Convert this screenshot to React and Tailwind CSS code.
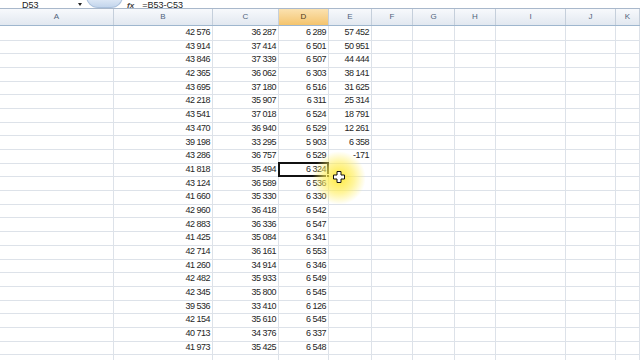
const rows = [
  ["42 576", "36 287", "6 289", "57 452"],
  ["43 914", "37 414", "6 501", "50 951"],
  ["43 846", "37 339", "6 507", "44 444"],
  ["42 365", "36 062", "6 303", "38 141"],
  ["43 695", "37 180", "6 516", "31 625"],
  ["42 218", "35 907", "6 311", "25 314"],
  ["43 541", "37 018", "6 524", "18 791"],
  ["43 470", "36 940", "6 529", "12 261"],
  ["39 198", "33 295", "5 903", "6 358"],
  ["43 286", "36 757", "6 529", "-171"],
  ["41 818", "35 494", "6 324", ""],
  ["43 124", "36 589", "6 536", ""],
  ["41 660", "35 330", "6 330", ""],
  ["42 960", "36 418", "6 542", ""],
  ["42 883", "36 336", "6 547", ""],
  ["41 425", "35 084", "6 341", ""],
  ["42 714", "36 161", "6 553", ""],
  ["41 260", "34 914", "6 346", ""],
  ["42 482", "35 933", "6 549", ""],
  ["42 345", "35 800", "6 545", ""],
  ["39 536", "33 410", "6 126", ""],
  ["42 154", "35 610", "6 545", ""],
  ["40 713", "34 376", "6 337", ""],
  ["41 973", "35 425", "6 548", ""],
  ["", "", "", ""],
];

const cols = ["A", "B", "C", "D", "E", "F", "G", "H", "I", "J", "K"];
const gridCols = "grid grid-cols-[114px_99px_66px_50px_43px_41px_42px_41px_70px_50px_1fr]";

function Cell({ value, selected }) {
  return (
    <div className="relative h-full border-r border-b border-[#dde2e9] flex items-center justify-end pr-[2px] text-[9px] tracking-[-0.5px] text-[#262626]">
      {value}
      {selected && (
        <div className="absolute -left-px -top-px -right-px -bottom-px border-2 border-[#111]">
          <div className="absolute -right-[3px] -bottom-[3px] w-[4px] h-[4px] bg-[#111] border border-white" />
        </div>
      )}
    </div>
  );
}

export default function App() {
  return (
    <div className="relative w-[640px] h-[360px] overflow-hidden bg-white" style={{ fontFamily: '"Liberation Sans", Arial, sans-serif' }}>
      {/* formula bar, mostly scrolled off the top */}
      <div className="h-[9px] overflow-hidden border-b border-[#a9b8cb] bg-white flex items-end text-[9px] text-[#222]">
        <div className="w-[86px] h-full flex items-end relative">
          <span className="ml-[22px] -mb-[2px] leading-none">D53</span>
          <span className="absolute left-[78px] bottom-[2px] w-0 h-0 border-l-[2.5px] border-r-[2.5px] border-t-[3px] border-l-transparent border-r-transparent border-t-[#222]" />
        </div>
        <div className="w-[37px] h-[12px] -mt-[4px] self-start rounded-b-full bg-gradient-to-b from-[#e6eef9] to-[#c3d5ec] border border-[#aac0dc]" />
        <span className="ml-[4px] -mb-[2px] leading-none italic font-bold text-[8px] text-[#444]">fx</span>
        <span className="ml-[8px] -mb-[2px] leading-none">=B53-C53</span>
      </div>

      {/* column headers */}
      <div className={`${gridCols} h-[17px] border-b border-[#9eb6ce]`}>
        {cols.map((c) => (
          <div
            key={c}
            className={`flex items-center justify-center text-[8px] border-r border-[#c5cfdb] ${
              c === "D"
                ? "bg-gradient-to-b from-[#fbe2b0] to-[#f4c46c] text-[#4b3a1b]"
                : "bg-gradient-to-b from-[#f7f9fc] to-[#e2e8f0] text-[#50637b]"
            }`}
          >
            {c}
          </div>
        ))}
      </div>

      {/* sheet */}
      <div className="flex flex-col">
        {rows.map((r, i) => (
          <div key={i} className={`${gridCols} h-[13.7px]`}>
            <Cell value="" />
            <Cell value={r[0]} />
            <Cell value={r[1]} />
            <Cell value={r[2]} selected={i === 10} />
            <Cell value={r[3]} />
            <Cell value="" />
            <Cell value="" />
            <Cell value="" />
            <Cell value="" />
            <Cell value="" />
            <Cell value="" />
          </div>
        ))}
      </div>

      {/* highlighted mouse pointer */}
      <div className="absolute left-[312px] top-[151px] w-[54px] h-[54px] rounded-full bg-[radial-gradient(circle,rgba(255,232,40,0.9)_0%,rgba(255,238,90,0.6)_40%,rgba(255,245,150,0)_70%)]" />
      <svg className="absolute left-[333px] top-[171px]" width="12" height="12" viewBox="0 0 12 12">
        <path d="M4 0.5h4v3.5h3.5v4H8v3.5H4V8H0.5V4H4z" fill="#fff" stroke="#111" strokeWidth="1" />
      </svg>
    </div>
  );
}
